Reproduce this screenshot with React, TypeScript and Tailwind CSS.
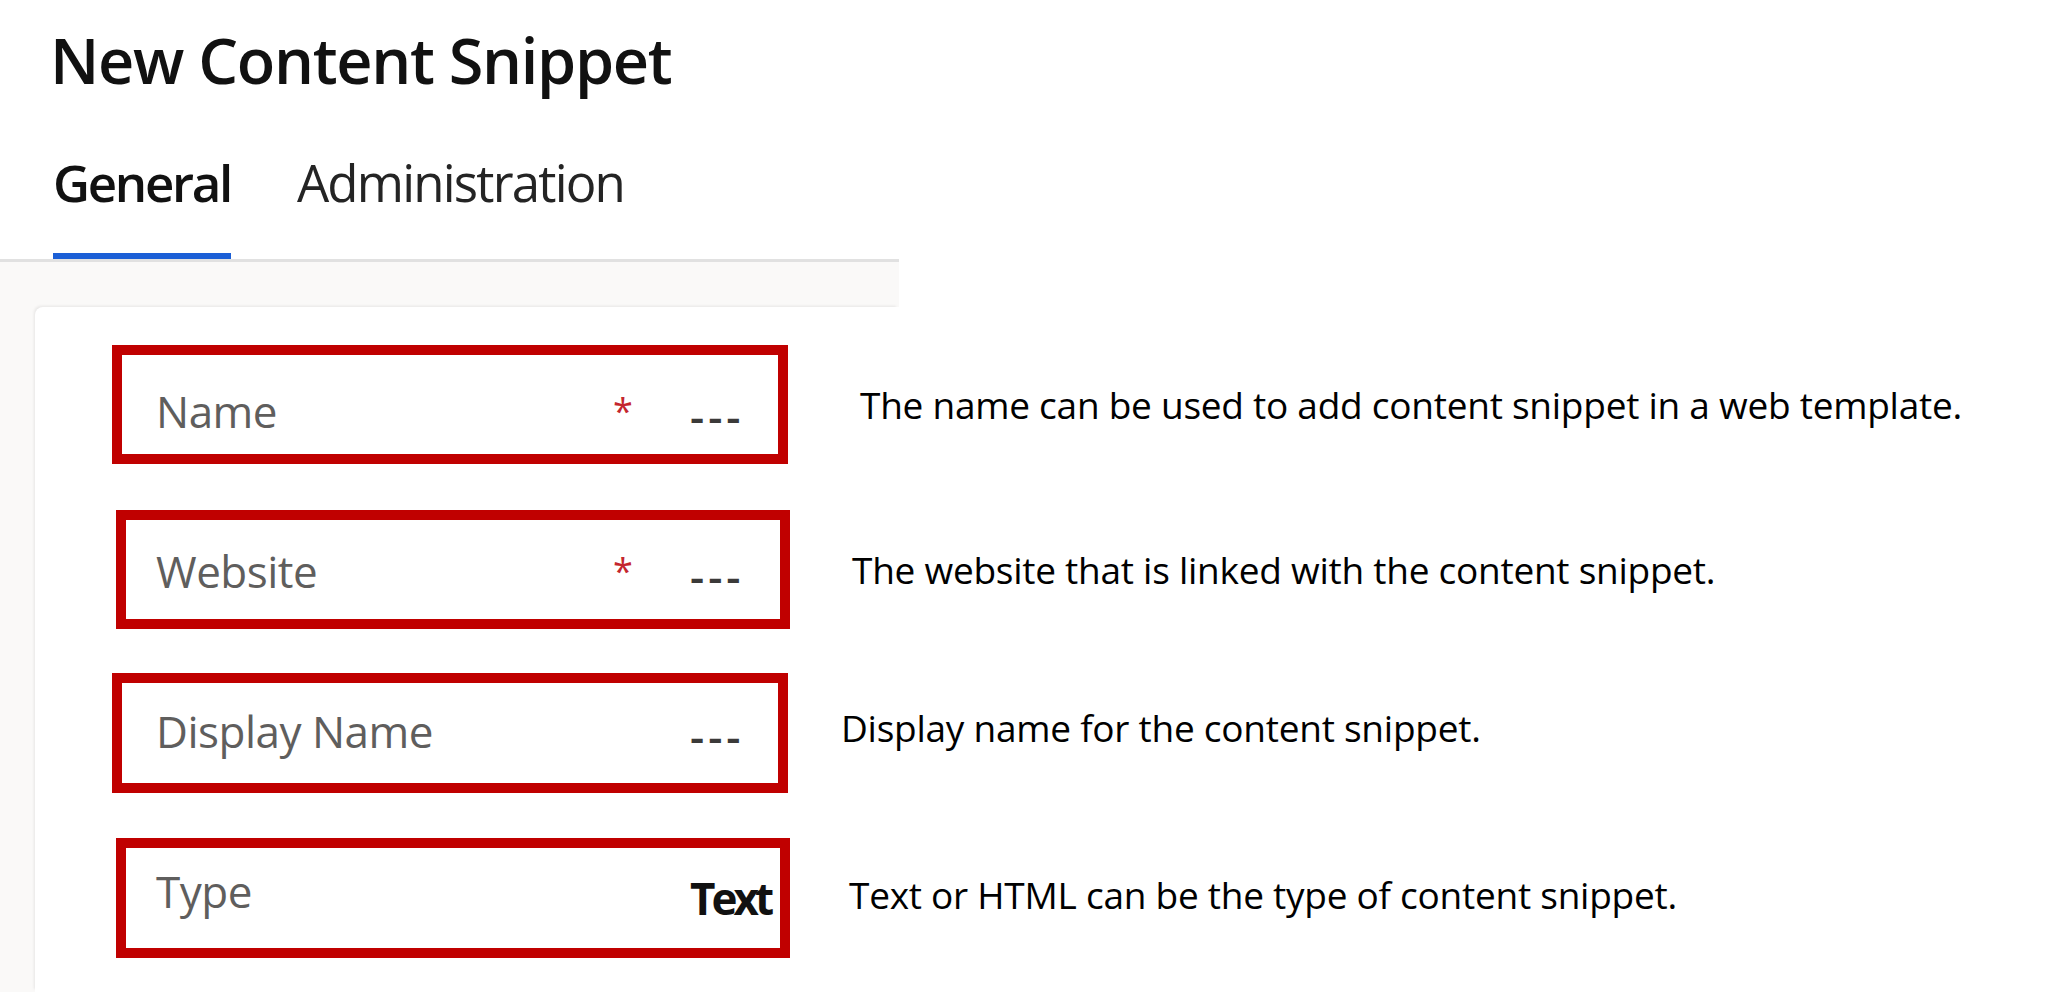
import React from 'react';

interface Field {
  label: string;
  required: boolean;
  value: string;
  description: string;
  rowClass: string;
  boxClass: string;
  labelClass: string;
  descClass: string;
}

const fields: Field[] = [
  {
    label: 'Name',
    required: true,
    value: '---',
    description: 'The name can be used to add content snippet in a web template.',
    rowClass: 'mt-0',
    boxClass: 'ml-[77px] w-[676px] h-[119px] pt-[34px] pl-[34px]',
    labelClass: 'w-[457px]',
    descClass: 'ml-[72px]',
  },
  {
    label: 'Website',
    required: true,
    value: '---',
    description: 'The website that is linked with the content snippet.',
    rowClass: 'mt-[46px]',
    boxClass: 'ml-[81px] w-[674px] h-[119px] pt-[29px] pl-[30px]',
    labelClass: 'w-[457px]',
    descClass: 'ml-[62px]',
  },
  {
    label: 'Display Name',
    required: false,
    value: '---',
    description: 'Display name for the content snippet.',
    rowClass: 'mt-[44px]',
    boxClass: 'ml-[77px] w-[676px] h-[120px] pt-[26px] pl-[34px]',
    labelClass: 'w-[534px]',
    descClass: 'ml-[53px] mb-[10px]',
  },
  {
    label: 'Type',
    required: false,
    value: 'Text',
    description: 'Text or HTML can be the type of content snippet.',
    rowClass: 'mt-[45px]',
    boxClass: 'ml-[81px] w-[674px] h-[120px] pt-[21px] pl-[30px]',
    labelClass: 'w-[534px]',
    descClass: 'ml-[59px] mb-[6px]',
  },
];

function FieldRow({ field }: { field: Field }) {
  return (
    <div className={`flex items-center ${field.rowClass}`}>
      {/* annotated field box */}
      <div className={`shrink-0 flex items-start border-[10px] border-[#c00000] ${field.boxClass}`}>
        <span className={`shrink-0 text-[44px] leading-[44px] tracking-[-0.5px] text-[#5f5e5d] ${field.labelClass}`}>
          {field.label}
        </span>
        {field.required && (
          <span className="shrink-0 w-[77px] mt-[4px] text-[36px] leading-[36px] text-[#c4262e]">*</span>
        )}
        {field.value === '---' ? (
          <span className="mt-[5px] text-[44px] leading-[44px] font-semibold tracking-[4px] text-[#3b3a39]">
            ---
          </span>
        ) : (
          <span className="mt-[7px] text-[44px] leading-[44px] font-bold tracking-[-4px] text-[#111111]">
            {field.value}
          </span>
        )}
      </div>
      <p className={`whitespace-nowrap text-[37px] leading-[38px] tracking-[-0.25px] text-black ${field.descClass}`}>
        {field.description}
      </p>
    </div>
  );
}

export default function App() {
  return (
    <div className="w-[2048px] h-[992px] overflow-hidden bg-white font-['Open_Sans','Noto_Sans',sans-serif]">
      <div className="w-[899px] h-full flex flex-col">
        {/* Header */}
        <h1 className="pt-[28px] pl-[50px] text-[63px] leading-[63px] font-semibold tracking-[-1.3px] text-[#111111]">
          New Content Snippet
        </h1>

        {/* Tabs */}
        <div className="mt-[65px] pl-[53px] flex gap-[66px] border-b-[3px] border-[#e1e1e1]">
          <div className="flex flex-col">
            <span className="text-[51px] leading-[52px] font-semibold tracking-[-2.3px] text-[#111111]">General</span>
            <div className="mt-[45px] h-[6px] bg-[#1b5fd6]"></div>
          </div>
          <div className="flex flex-col">
            <span className="text-[51px] leading-[52px] tracking-[-1.8px] text-[#242424]">Administration</span>
          </div>
        </div>

        {/* Form area */}
        <div className="flex-1 flex flex-col bg-[#faf9f8] pt-[45px] pl-[35px]">
          <div className="flex-1 bg-white rounded-tl-[8px] shadow-[-2px_-2px_3px_-1px_rgba(0,0,0,0.08)] pt-[38px]">
            {fields.map((field) => (
              <FieldRow key={field.label} field={field} />
            ))}
          </div>
        </div>
      </div>
    </div>
  );
}
